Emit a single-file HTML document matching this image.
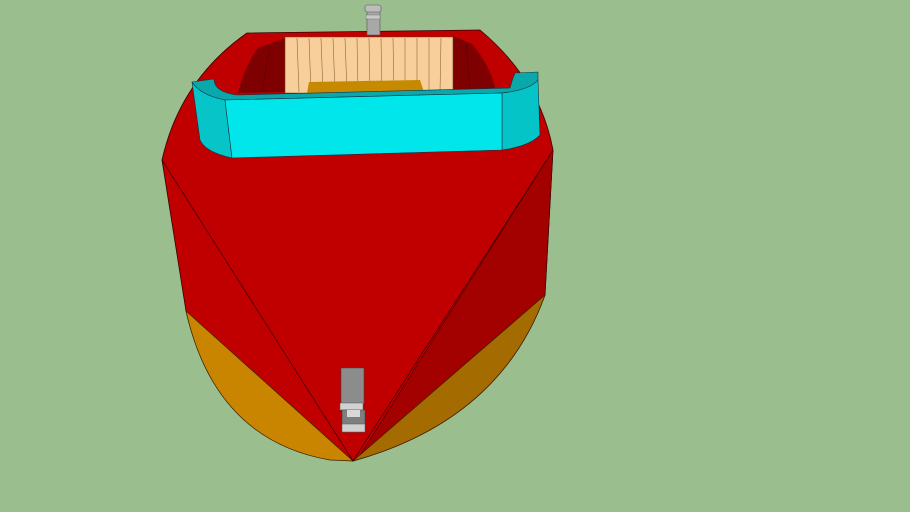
<!DOCTYPE html>
<html><head><meta charset="utf-8"><style>html,body{margin:0;padding:0;background:#9bbe8f;}svg{display:block}</style></head>
<body>
<svg width="910" height="512" viewBox="0 0 910 512" xmlns="http://www.w3.org/2000/svg" stroke-linejoin="round">
<rect width="910" height="512" fill="#9bbe8f"/>
<!-- hull outline red -->
<path d="M247,33 L480,30 Q540,80 553,150 L545,295 Q500,420 353,461 Q215,440 186,311 L162,160 Q180,80 247,33 Z" fill="#c00000" stroke="#3a0000" stroke-width="0.8"/>
<!-- right darker face -->
<path d="M553,150 L545,295 L357,460 Z" fill="#a30000" stroke="#3a0000" stroke-width="0.6"/>
<!-- left orange -->
<path d="M186,311 Q215,440 330,460 L353,461 Z" fill="#c98400" stroke="#3a2000" stroke-width="0.7"/>
<!-- right orange -->
<path d="M545,295 Q500,420 353,461 Z" fill="#a46b00" stroke="#3a2000" stroke-width="0.7"/>
<line x1="162" y1="160" x2="353" y2="461" stroke="#3a0000" stroke-width="0.7"/>
<line x1="553" y1="150" x2="353" y2="461" stroke="#3a0000" stroke-width="0.7"/>
<!-- cockpit interior -->
<path d="M258,48 L285,38 L285,92 L238,93 Q245,65 258,48 Z" fill="#7e0000"/>
<path d="M453,36 L472,44 Q490,65 495,88 L453,90 Z" fill="#7e0000"/>
<line x1="270" y1="45" x2="262" y2="92" stroke="#5a0000" stroke-width="0.6"/>
<line x1="466" y1="42" x2="470" y2="88" stroke="#5a0000" stroke-width="0.6"/>
<!-- wood panel -->
<rect x="285" y="37" width="168" height="56" fill="#f8cf9a" stroke="#6a4a20" stroke-width="0.6"/>
<g stroke="#8a6a40" stroke-width="0.6">
<line x1="297" y1="38" x2="299" y2="92"/><line x1="309" y1="38" x2="311" y2="92"/><line x1="321" y1="38" x2="323" y2="92"/><line x1="333" y1="38" x2="335" y2="92"/><line x1="345" y1="38" x2="347" y2="92"/><line x1="357" y1="38" x2="358" y2="92"/><line x1="369" y1="38" x2="370" y2="92"/><line x1="381" y1="38" x2="382" y2="92"/><line x1="393" y1="38" x2="394" y2="92"/><line x1="405" y1="38" x2="405" y2="92"/><line x1="417" y1="38" x2="417" y2="92"/><line x1="429" y1="38" x2="429" y2="92"/><line x1="441" y1="38" x2="440" y2="92"/>
</g>
<path d="M309,82 L420,80 L424,92 L307,93 Z" fill="#c68a00"/>
<!-- cylinder -->
<rect x="367" y="11" width="13" height="24" fill="#a8a8a8" stroke="#555" stroke-width="0.6"/>
<rect x="365" y="5" width="16" height="7" rx="2" fill="#bdbdbd" stroke="#555" stroke-width="0.6"/>
<rect x="366" y="15" width="14" height="4" fill="#c8c8c8" stroke="#666" stroke-width="0.4"/>
<!-- cyan rim top strip -->
<path d="M192,82 L214,79 Q214,92 237,95 L510,88 Q512,80 515,73 L538,72 L538,80 Q530,90 502,93 L225,100 Q200,95 192,82 Z" fill="#0aa8aa" stroke="#134" stroke-width="0.6"/>
<!-- left curved side -->
<path d="M192,82 Q200,95 225,100 L232,158 Q205,152 200,140 Z" fill="#06c4c8" stroke="#134" stroke-width="0.6"/>
<!-- right curved side -->
<path d="M502,93 Q530,90 538,80 L540,135 Q530,146 502,150 Z" fill="#05c4c8" stroke="#134" stroke-width="0.6"/>
<!-- front face -->
<path d="M225,100 L502,93 L502,150 L232,158 Z" fill="#00e6ea" stroke="#134" stroke-width="0.6"/>
<!-- outboard -->
<rect x="341" y="368" width="23" height="36" fill="#8c8c8c" stroke="#444" stroke-width="0.6"/>
<rect x="340" y="403" width="23" height="7" fill="#d2d2d2" stroke="#555" stroke-width="0.5"/>
<rect x="342" y="410" width="23" height="22" fill="#7e7e7e" stroke="#444" stroke-width="0.6"/>
<rect x="347" y="410" width="13" height="7" fill="#d8d8d8"/>
<rect x="342" y="424" width="23" height="8" fill="#d0d0d0" stroke="#555" stroke-width="0.5"/>
</svg>
</body></html>
